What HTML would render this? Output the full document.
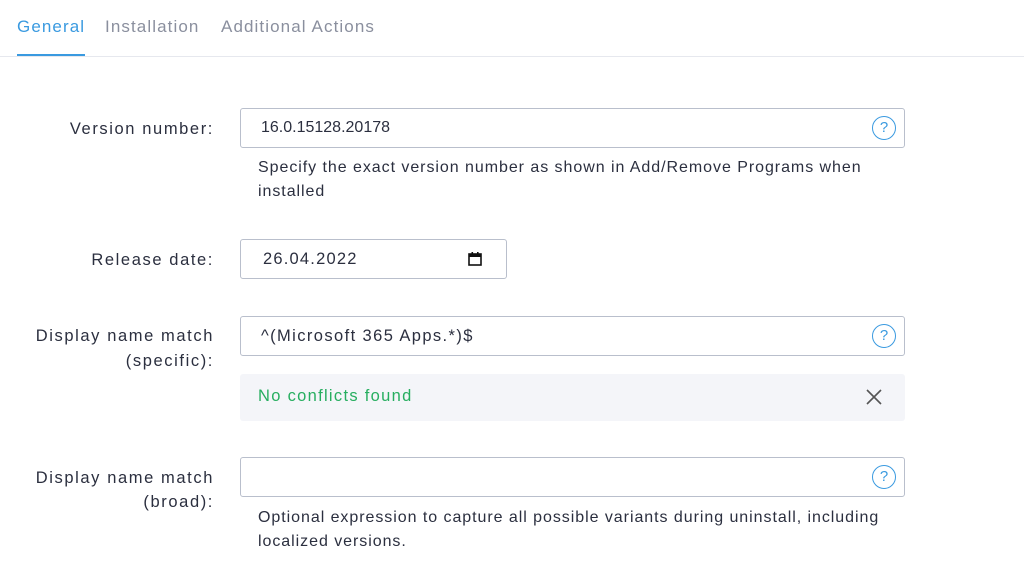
<!DOCTYPE html>
<html><head><meta charset="utf-8"><style>
body{margin:0;width:1024px;height:570px;background:#fff;font-family:"Liberation Sans",sans-serif;position:relative;overflow:hidden;color:#2b2f3f}
.a{position:absolute;white-space:nowrap}
.tab{font-size:17px;color:#8a8f9e;top:15px;line-height:24px;letter-spacing:1.1px}
.lbl{font-size:16.5px;right:810px;text-align:right;line-height:24px;letter-spacing:1.6px}
.inp{position:absolute;left:240px;width:663px;height:38px;border:1px solid #b9bfcc;border-radius:3px;background:#fff}
.val{font-size:16.5px;line-height:24px;color:#2b2f3f}
.help{font-size:16px;line-height:24px;color:#2b2f3f;letter-spacing:0.95px}
.q{position:absolute;right:8px;top:7px;width:22px;height:22px;border:1.5px solid #3a9ae0;border-radius:50%;color:#3a9ae0;font-size:15px;line-height:22px;text-align:center}
</style></head><body>
<div class="a tab" style="left:17px;color:#3a9ae0">General</div>
<div class="a" style="left:17px;top:54px;width:68px;height:2px;background:#3a9ae0"></div>
<div class="a tab" style="left:105px">Installation</div>
<div class="a tab" style="left:221px">Additional Actions</div>
<div class="a" style="left:0;top:56px;width:1024px;height:1px;background:#e6e8ee"></div>

<div class="a lbl" style="top:117px">Version number:</div>
<div class="inp" style="top:108px"><div class="a val" style="left:20px;top:7px;font-size:16px">16.0.15128.20178</div><div class="q">?</div></div>
<div class="a help" style="left:258px;top:156px">Specify the exact version number as shown in Add/Remove Programs when</div>
<div class="a help" style="left:258px;top:180px">installed</div>

<div class="a lbl" style="top:248px">Release date:</div>
<div class="inp" style="top:239px;width:265px"><div class="a val" style="left:22px;top:7px;letter-spacing:1.2px">26.04.2022</div>
<svg class="a" style="left:226px;top:11px" width="16" height="16" viewBox="0 0 16 16"><rect x="2" y="3" width="12" height="11" fill="none" stroke="#111" stroke-width="1.6"/><rect x="2" y="3" width="12" height="3" fill="#111"/><rect x="4.5" y="1" width="1.6" height="3" fill="#111"/><rect x="10" y="1" width="1.6" height="3" fill="#111"/></svg></div>

<div class="a lbl" style="top:324px">Display name match</div>
<div class="a lbl" style="top:349px">(specific):</div>
<div class="inp" style="top:316px"><div class="a val" style="left:20px;top:7px;font-size:16.5px;letter-spacing:1.4px">^(Microsoft 365 Apps.*)$</div><div class="q">?</div></div>
<div class="a" style="left:240px;top:374px;width:665px;height:47px;background:#f4f5f9;border-radius:3px">
<div class="a" style="left:18px;top:10px;font-size:16.5px;line-height:24px;color:#27ae60;letter-spacing:1.3px">No conflicts found</div>
<svg class="a" style="left:625px;top:14px" width="18" height="18" viewBox="0 0 18 18"><path d="M2 2L16 16M16 2L2 16" stroke="#555" stroke-width="1.6"/></svg></div>

<div class="a lbl" style="top:466px">Display name match</div>
<div class="a lbl" style="top:490px">(broad):</div>
<div class="inp" style="top:457px"><div class="q">?</div></div>
<div class="a help" style="left:258px;top:506px">Optional expression to capture all possible variants during uninstall, including</div>
<div class="a help" style="left:258px;top:530px">localized versions.</div>
</body></html>
